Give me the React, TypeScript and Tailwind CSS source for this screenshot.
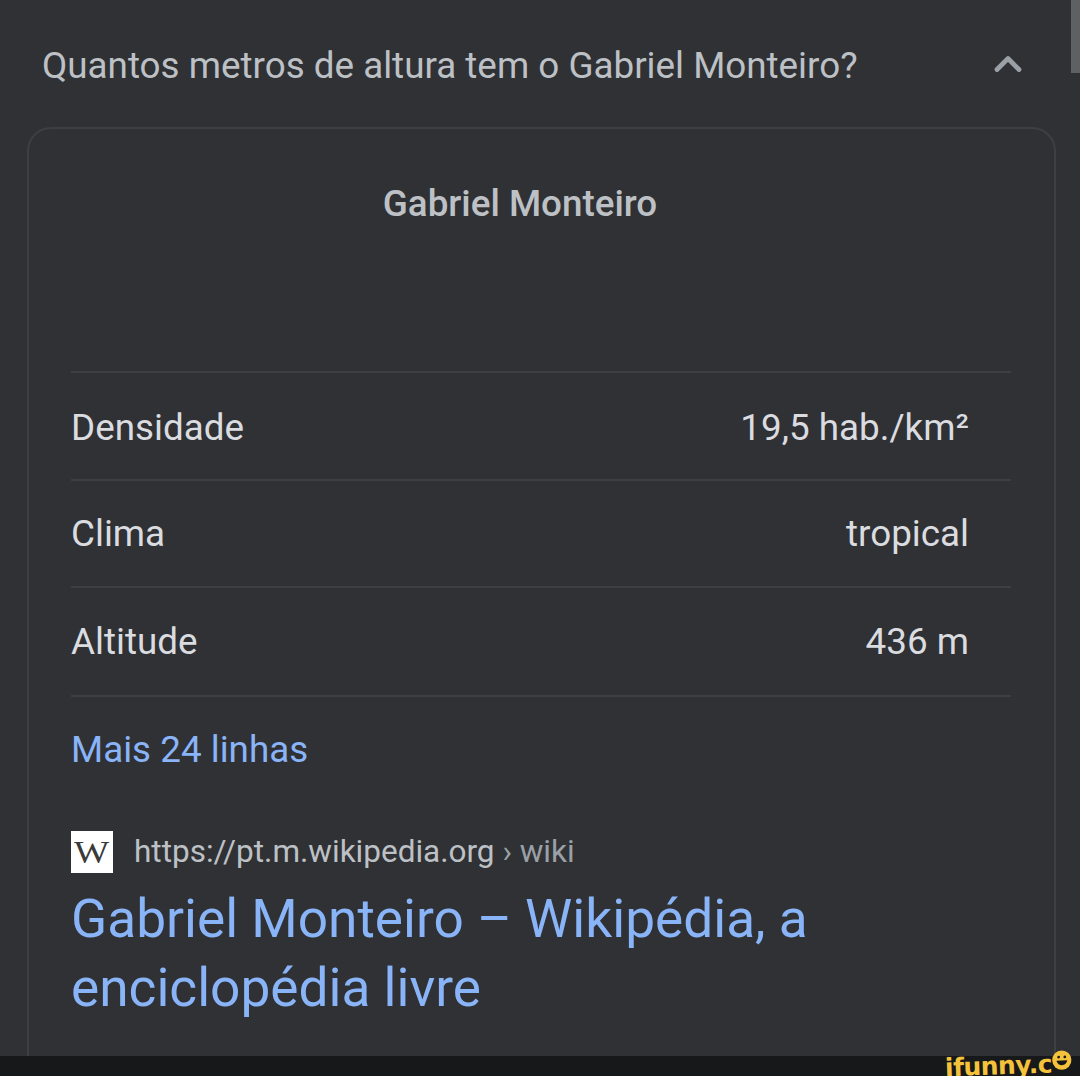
import { ChevronUp } from "lucide-react";

const rows = [
  { label: "Densidade", value: "19,5 hab./km²", h: "h-[108px]", pad: "pt-[3px]" },
  { label: "Clima", value: "tropical", h: "h-[107px]", pad: "" },
  { label: "Altitude", value: "436 m", h: "h-[109px]", pad: "" },
];

function WatermarkSmiley() {
  return (
    <svg width="20" height="20" viewBox="0 0 26 26" className="shrink-0 mt-[1px]">
      <circle cx="13" cy="13" r="12.5" fill="#f5c33b" />
      <circle cx="9" cy="9" r="1.8" fill="#17181a" />
      <circle cx="17" cy="9" r="1.8" fill="#17181a" />
      <path d="M6 13.500c1 4.500 4 6 7 6s6-1.500 7-6z" fill="#17181a" />
    </svg>
  );
}

export default function App() {
  return (
    <div className="w-[1080px] h-[1076px] overflow-hidden bg-[#17181a] font-['Roboto',sans-serif]">
      <div className="relative h-[1056px] overflow-hidden bg-[#303134]">
        {/* Overlay scrollbar */}
        <div className="absolute top-0 right-0 w-[9px] h-[73px] bg-[#5f6063]" />

        {/* Question header */}
        <div className="flex items-center justify-between h-[127px] pt-[4px] pl-[42px] pr-[50px]">
          <h2 className="text-[36.8px] leading-[40px] font-normal text-[#bdc1c6]">
            Quantos metros de altura tem o Gabriel Monteiro?
          </h2>
          <ChevronUp size={44} strokeWidth={2.6} className="text-[#9aa0a6] mt-[-4px]" />
        </div>

        {/* Answer card */}
        <div className="ml-[27px] mr-[24px] h-[1000px] rounded-t-[24px] border-2 border-[#3c4043] pl-[42px] pr-[43px]">
          <div className="h-[242px] pt-[55px] text-center">
            <h3 className="text-[36.8px] leading-[40px] font-medium text-[#bdc1c6] pr-[42px]">
              Gabriel Monteiro
            </h3>
          </div>

          {rows.map((row) => (
            <div
              key={row.label}
              className={`flex items-center justify-between border-t-2 border-[#3c4043] pr-[42px] text-[36.8px] text-[#dadce0] ${row.h} ${row.pad}`}
            >
              <span>{row.label}</span>
              <span>{row.value}</span>
            </div>
          ))}

          <div className="border-t-2 border-[#3c4043] h-[107px] flex items-center text-[36.8px] text-[#8ab4f8]">
            Mais 24 linhas
          </div>

          {/* Source */}
          <div className="flex items-center gap-[21px] h-[42px] mt-[29px]">
            <div className="flex h-[42px] w-[42px] items-center justify-center bg-white">
              <span className="font-['Liberation_Serif',serif] text-[31px] leading-none text-[#3a3a3a] scale-x-[1.2]">W</span>
            </div>
            <span className="text-[31.5px] text-[#9aa0a6]">
              <span className="text-[#bdc1c6]">https://pt.m.wikipedia.org</span> › wiki
            </span>
          </div>

          <h3 className="mt-[12px] text-[53.2px] leading-[69px] font-normal text-[#8ab4f8]">
            Gabriel Monteiro – Wikipédia, a
            <br />
            enciclopédia livre
          </h3>
        </div>
      </div>

      {/* Watermark strip */}
      <div className="relative h-[20px] bg-[#17181a]">
        <div className="absolute left-[945px] top-[-5px] flex items-start text-[#f5c33b] -rotate-2">
          <span className="font-['DejaVu_Sans',sans-serif] text-[25px] leading-[30px] font-bold tracking-[-0.5px]">ifunny.c</span>
          <WatermarkSmiley />
        </div>
      </div>
    </div>
  );
}
